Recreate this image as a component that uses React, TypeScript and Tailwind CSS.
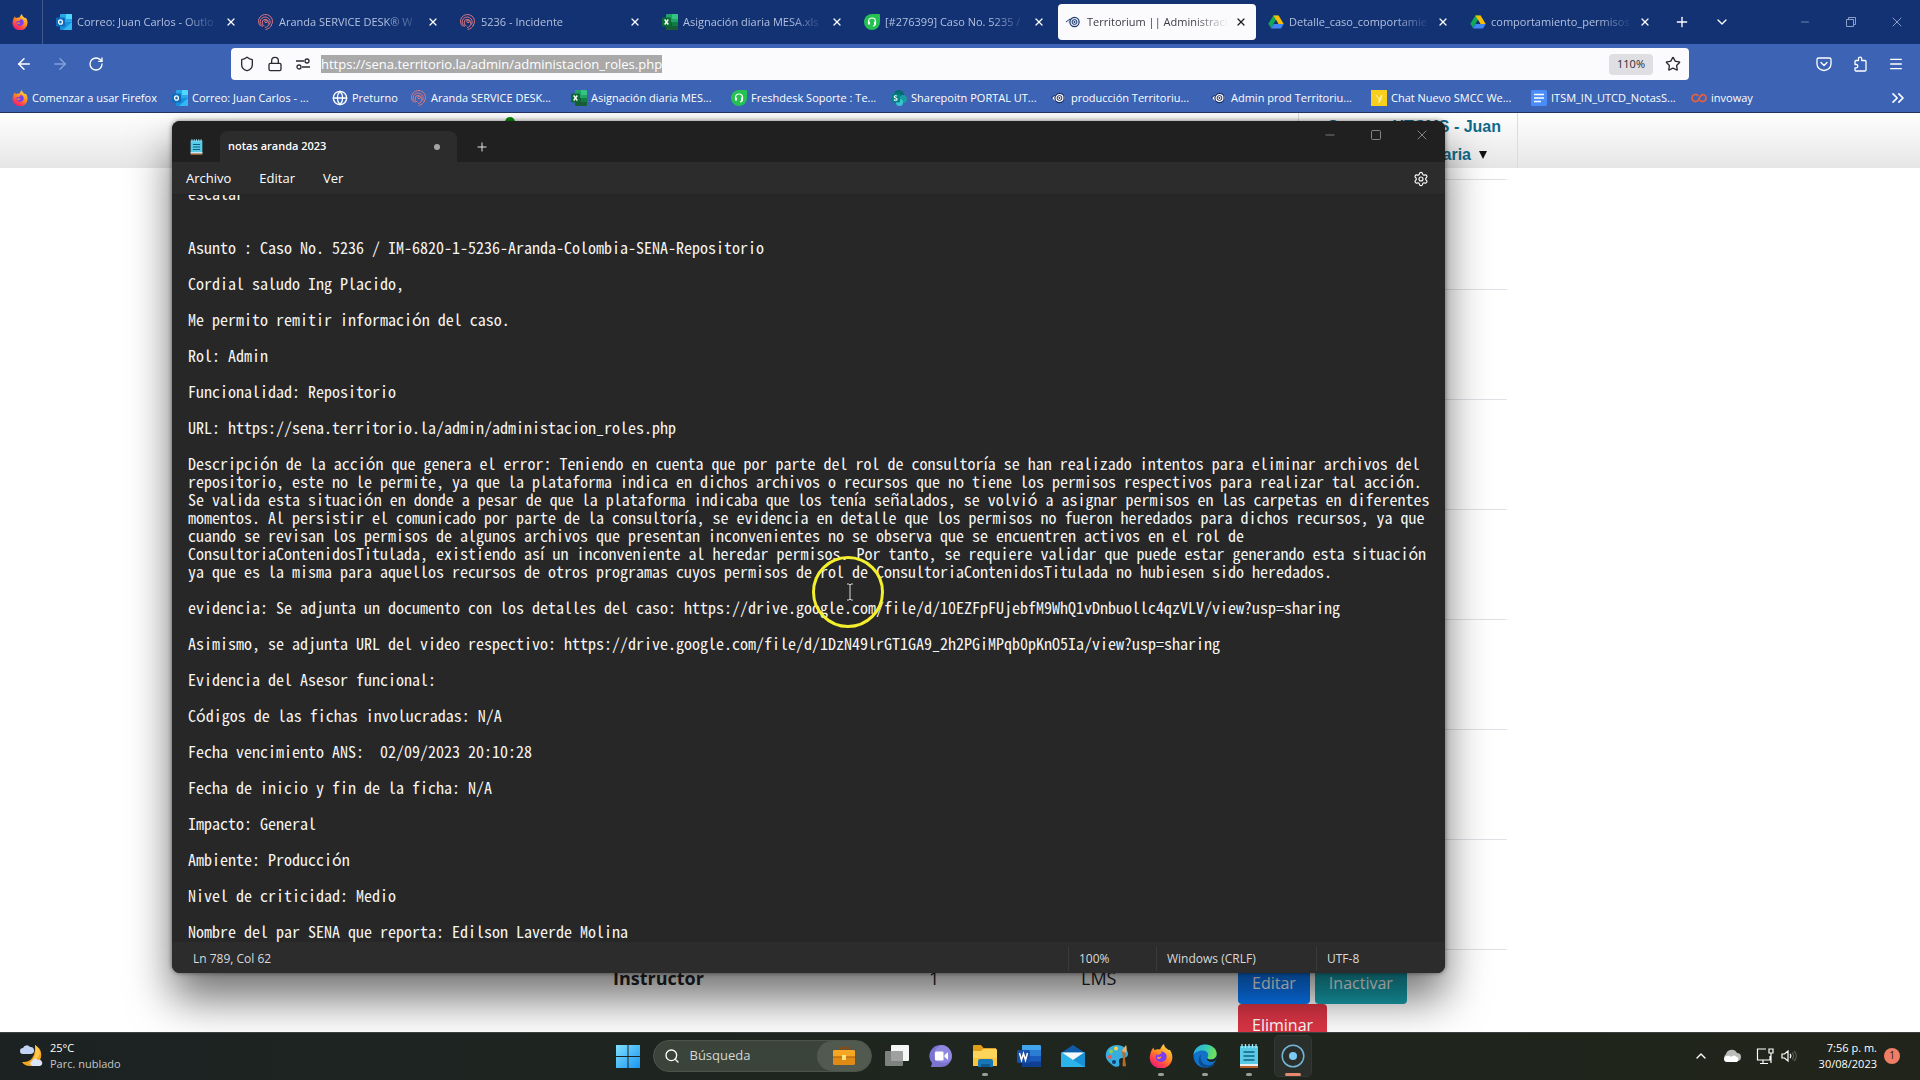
import type { ReactNode } from 'react'
import { ArrowLeft, ArrowRight, ChevronDown, ChevronUp, ChevronsRight, Globe, Lock, Menu, Minus, Plus, RotateCw, Search, Settings, Shield, Square, Star, X } from 'lucide-react'

/* ---------- icons ---------- */

function Firefox({ className = 'size-4' }: { className?: string }){
  return (
    <svg viewBox="0 0 24 24" className={className} aria-hidden="true">
      <defs>
        <linearGradient id="ffx" x1="0.8" y1="0" x2="0.2" y2="1">
          <stop offset="0" stopColor="#ffe14a" />
          <stop offset="0.45" stopColor="#ff8a1f" />
          <stop offset="0.75" stopColor="#ff3d4f" />
          <stop offset="1" stopColor="#e31587" />
        </linearGradient>
      </defs>
      <path d="M15 0c0 2 1 3.200 3 4.800 1.500 1.200 2 1.600 2.700 1 1.600 2 2.600 4.600 2.600 7.200A11.300 11 0 1 1 1.500 9.500C2 7 3 5 4.600 3.400c0 1.200.4 2 1 2.600C8 5 9.500 5 11 5.600 12 3.500 13 1.200 15 0z" fill="url(#ffx)" />
      <path d="M12 7.500c3.500 0 6 2.500 5.600 5.800-.4 3-3 4.700-5.600 4.600-3.200-.1-5.400-2.300-5.400-5 0-1 .3-1.800.8-2.500.9.5 2 .4 3 0 1-.4 1.200-1 2.200-1.100-.2-.9-.6-1.400-.6-1.800z" fill="#7a3df0" />
      <path d="M8 12.500c1.500.9 3 .8 4.500-.2-.4 1.800-1.400 2.700-3 2.700-1 0-1.500-1-1.500-2.500z" fill="#ff9a2b" />
    </svg>
  )
}

function Outlook(){
  return (
    <svg viewBox="0 0 16 16" className="size-4" aria-hidden="true">
      <path d="M5 0h10a1 1 0 0 1 1 1v8H4V1a1 1 0 0 1 1-1z" fill="#28a8ea" />
      <path d="M10 0h5a1 1 0 0 1 1 1v4h-6z" fill="#50d9ff" />
      <path d="M4 8h12v7a1 1 0 0 1-1 1H5a1 1 0 0 1-1-1z" fill="#1490df" />
      <path d="M16 8v7a1 1 0 0 1-1 1H7z" fill="#35b8f1" />
      <rect x="0" y="3.500" width="9" height="9" rx="1" fill="#0f6cbd" />
      <ellipse cx="4.500" cy="8" rx="1.900" ry="2.200" fill="none" stroke="#fff" strokeWidth="1.300" />
    </svg>
  )
}

function Aranda(){
  return (
    <svg viewBox="0 0 16 16" className="size-4" fill="none" stroke="#d9767f" strokeWidth="1" aria-hidden="true">
      <path d="M3 12.500A7 6.800 0 1 1 13 11.500M5 12.500A5 5 0 1 1 11.500 10.500M6.500 12A3.200 3.400 0 1 1 10.500 9M7.500 15.500c3-.6 5-2 6-4.500M7 13.500c2.500-.3 4-2 4-5" />
      <circle cx="8" cy="7.300" r="1.300" />
    </svg>
  )
}

function Excel(){
  return (
    <svg viewBox="0 0 16 16" className="size-4" aria-hidden="true">
      <rect x="4" y="0" width="12" height="16" rx="1" fill="#21a366" />
      <path d="M10 0h5a1 1 0 0 1 1 1v4h-6z" fill="#33c481" />
      <path d="M4 8h12v7a1 1 0 0 1-1 1H5a1 1 0 0 1-1-1z" fill="#185c37" />
      <path d="M10 8h6v4h-6z" fill="#107c41" />
      <rect x="0" y="3.500" width="9" height="9" rx="1" fill="#0b6a35" />
      <path d="M2.700 5.500l3.600 5M6.300 5.500l-3.600 5" stroke="#fff" strokeWidth="1.400" />
    </svg>
  )
}

function Freshdesk(){
  return (
    <svg viewBox="0 0 16 16" className="size-4" aria-hidden="true">
      <path d="M8 0h7a1 1 0 0 1 1 1v7a8 8 0 1 1-8-8z" fill="#25c151" />
      <path d="M4.500 9V7.500a3.500 3.500 0 0 1 7 0V9c0 2-1 2.800-2.500 3" fill="none" stroke="#fff" strokeWidth="1.200" />
      <path d="M4 7.500h2v3H4zM10 7.500h2v3h-2z" fill="#fff" />
    </svg>
  )
}

function Territorium({ ring = '#fff', ink = '#1d2f63' }: { ring?: string, ink?: string }){
  return (
    <svg viewBox="0 0 16 16" className="size-4" fill="none" aria-hidden="true">
      <path d="M1.500 8C4 3 12 2 14 8c-2 6-10 5-12.500 0z" fill={ring} />
      <path d="M0 8l4-3" stroke={ink} strokeWidth="1" />
      <circle cx="8.500" cy="8" r="4.600" stroke={ink} strokeWidth="1.200" />
      <circle cx="8.500" cy="8" r="2.400" stroke={ink} strokeWidth="1" />
      <circle cx="8.500" cy="8" r="0.900" fill={ink} />
    </svg>
  )
}

function Drive(){
  return (
    <svg viewBox="0 0 16 16" className="size-4" aria-hidden="true">
      <path d="M5.400 1.500h5.200L8 6 3 14 .3 9.800z" fill="#0fa958" />
      <path d="M5.400 1.500h5.200l5.100 8.500h-5.300z" fill="#fbbc05" />
      <path d="M5.500 10h10.200L13 14.500H2.800z" fill="#4285f4" />
      <path d="M8 6l2.400 4H5.500z" fill="#123274" />
    </svg>
  )
}

function Sharepoint(){
  return (
    <svg viewBox="0 0 16 16" className="size-4" aria-hidden="true">
      <circle cx="8" cy="5" r="5" fill="#036c70" />
      <circle cx="12" cy="9" r="4" fill="#1a9ba1" />
      <circle cx="8.500" cy="12.500" r="3.500" fill="#37c6d0" />
      <rect x="0" y="3.500" width="9" height="9" rx="1" fill="#038387" />
      <path d="M6 6.300C5.500 5.500 3.200 5.500 3.200 6.800c0 1.400 2.900.9 2.900 2.400 0 1.300-2.400 1.400-3.200.4" fill="none" stroke="#fff" strokeWidth="1.100" />
    </svg>
  )
}

function ChatBox(){
  return (
    <svg viewBox="0 0 16 16" className="size-4" aria-hidden="true">
      <rect width="16" height="16" fill="#f8cf1d" />
      <path d="M5 5l3 4 3-4-1 4-2 4V9z" fill="#fff1a8" stroke="#fff6cc" strokeWidth="0.600" />
    </svg>
  )
}

function Doc(){
  return (
    <svg viewBox="0 0 16 16" className="size-4" aria-hidden="true">
      <rect width="16" height="16" rx="1.500" fill="#4a8df8" />
      <path d="M3 4.500h10M3 8h10M3 11.500h7" stroke="#fff" strokeWidth="1.600" />
    </svg>
  )
}

function Invoway(){
  return (
    <svg viewBox="0 0 16 16" className="size-4" fill="none" stroke="#e8603c" strokeWidth="1.700" strokeLinecap="round" aria-hidden="true">
      <path d="M7 5.500C5 3.500 1 4.500 1 8s4 4.500 6 2.500L9.500 6C11 3.500 15 4.500 15 8s-4 4.500-6 2.500" />
    </svg>
  )
}

function NotepadGlyph({ className }: { className: string }){
  return (
    <svg viewBox="0 0 20 24" className={className} aria-hidden="true">
      <rect x="1" y="2" width="18" height="21" rx="1" fill="#57cbe8" />
      <rect x="1" y="20" width="18" height="2" fill="#e9eef0" />
      <rect x="1" y="22" width="18" height="2" fill="#b5622a" />
      <path d="M3 0v4M6.500 0v4M10 0v4M13.500 0v4M17 0v4" stroke="#a9ebfa" strokeWidth="1.300" />
      <path d="M4.500 8h11M4.500 12h11M4.500 16h11" stroke="#12617c" strokeWidth="1.600" />
    </svg>
  )
}

function Permissions(){
  return (
    <svg viewBox="0 0 16 16" className="size-4" fill="none" stroke="#2b2a33" strokeWidth="1.300" aria-hidden="true">
      <path d="M1 5h8M7 11h8" />
      <circle cx="12" cy="5" r="2" />
      <circle cx="4" cy="11" r="2" />
    </svg>
  )
}

function Pocket(){
  return (
    <svg viewBox="0 0 16 16" className="size-4" fill="none" stroke="#fff" strokeWidth="1.300" strokeLinecap="round" strokeLinejoin="round" aria-hidden="true">
      <path d="M2.500 2h11A1.500 1.500 0 0 1 15 3.500V8A7 6.500 0 0 1 1 8V3.500A1.500 1.500 0 0 1 2.500 2z" />
      <path d="M5 6.500l3 3 3-3" />
    </svg>
  )
}

function Puzzle(){
  return (
    <svg viewBox="0 0 16 16" className="size-4" fill="none" stroke="#fff" strokeWidth="1.300" strokeLinejoin="round" aria-hidden="true">
      <path d="M6.500 4.500V2.700a1.600 1.600 0 0 1 3.200 0v1.800H13a1 1 0 0 1 1 1V14a1 1 0 0 1-1 1H4a1 1 0 0 1-1-1v-2.200h1.500a1.700 1.700 0 0 0 0-3.300H3v-3a1 1 0 0 1 1-1z" />
    </svg>
  )
}

function Restore(){
  return (
    <svg viewBox="0 0 12 12" className="size-3" fill="none" stroke="#8ea0c8" strokeWidth="1" aria-hidden="true">
      <path d="M1.500 3.500h7v7h-7zM3.500 3.500v-2h7v7h-2" />
    </svg>
  )
}

function Weather(){
  return (
    <svg viewBox="0 0 24 24" className="size-6" aria-hidden="true">
      <path d="M16 1c5 3 7 7 6 12s-5 9-11 9c-4 0-7-2-8-4 8 1 14-5 13-17z" fill="#f5a623" />
      <path d="M16 1c3 2 5 5 5 8-2 6-6 10-12 11 6-3 9-10 7-19z" fill="#ffc84a" />
      <path d="M4 10a3 3 0 0 1 0-6 4 4 0 0 1 7-1 3.500 3.500 0 0 1 1 7z" fill="#c3d3f5" />
      <path d="M13 22a2.700 2.700 0 0 1 0-5 3.600 3.600 0 0 1 6-1 3 3 0 0 1 2 6z" fill="#dbe4f8" />
    </svg>
  )
}

function Windows(){
  return (
    <svg viewBox="0 0 24 24" className="size-6" aria-hidden="true">
      <defs>
        <linearGradient id="win" x1="0" y1="0" x2="1" y2="1">
          <stop offset="0" stopColor="#7fe0ff" />
          <stop offset="1" stopColor="#1a95f0" />
        </linearGradient>
      </defs>
      <path d="M0 1h11.500v11H0zM12.500 1H24v11H12.500zM0 13h11.500v11H0zM12.500 13H24v11H12.500z" fill="url(#win)" />
    </svg>
  )
}

function Briefcase(){
  return (
    <svg viewBox="0 0 24 20" className="h-5 w-6" aria-hidden="true">
      <path d="M8 4V2h8v2" fill="none" stroke="#8a4a10" strokeWidth="1.800" />
      <rect x="1" y="4" width="22" height="15" rx="1.500" fill="#e08a16" />
      <rect x="1" y="4" width="22" height="7" rx="1.500" fill="#f5a623" />
      <path d="M1 11h22" stroke="#a35a0c" />
      <rect x="10" y="9" width="4" height="5" fill="#ffe27a" />
    </svg>
  )
}

function TaskView(){
  return (
    <svg viewBox="0 0 24 24" className="size-6" aria-hidden="true">
      <rect x="6" y="1" width="18" height="16" rx="1" fill="#f6f6f6" />
      <rect x="0" y="7" width="18" height="15" rx="1" fill="#8f9290" fillOpacity="0.850" />
    </svg>
  )
}

function Chat(){
  return (
    <svg viewBox="0 0 24 24" className="size-6" aria-hidden="true">
      <path d="M12 1a11 11 0 1 1 0 22H2l1-4A11 11 0 0 1 12 1z" fill="#7b74cf" />
      <path d="M12 1a11 11 0 0 1 10 15c-3 3-10 4-16 0C3 10 6 4 12 1z" fill="#8f88de" />
      <rect x="6" y="7.500" width="8.500" height="9" rx="1.300" fill="#fff" />
      <path d="M15.500 11l3.500-2.800v7.600L15.500 13z" fill="#fff" />
    </svg>
  )
}

function Explorer(){
  return (
    <svg viewBox="0 0 24 24" className="size-6" aria-hidden="true">
      <path d="M1 1h7l2.500 3H23v6H0V2a1 1 0 0 1 1-1z" fill="#e09f18" />
      <path d="M0 7l8 0 2.500-2H23a1 1 0 0 1 1 1v16H0z" fill="#ffd45a" />
      <path d="M0 14h24v8H0z" fill="#fbc53c" />
      <path d="M5 23v-6a2 2 0 0 1 2-2h11a2 2 0 0 1 2 2v6z" fill="#1976b5" />
      <path d="M8 20h9v3H8z" fill="#0f5a90" />
    </svg>
  )
}

function Word(){
  return (
    <svg viewBox="0 0 24 24" className="size-6" aria-hidden="true">
      <rect x="5" y="1" width="19" height="22" rx="1.500" fill="#2b7cd3" />
      <path d="M5 1h17.500A1.500 1.500 0 0 1 24 2.500V6H5z" fill="#41a5ee" />
      <path d="M5 12h19v6H5z" fill="#185abd" />
      <path d="M5 17.500h19v4a1.500 1.500 0 0 1-1.500 1.500H5z" fill="#103f91" />
      <rect x="0" y="6" width="13" height="13" rx="1.500" fill="#184fa8" />
      <path d="M2.500 9l2 7 2-6.500 2 6.500 2-7" fill="none" stroke="#fff" strokeWidth="1.500" />
    </svg>
  )
}

function Mail(){
  return (
    <svg viewBox="0 0 24 24" className="size-6" aria-hidden="true">
      <path d="M12 1l12 8-12 7L0 9z" fill="#0f5ba8" />
      <path d="M0 8.500h24V23H0z" fill="#2bb3ea" />
      <path d="M24 8.500V23L8 13.500z" fill="#1890d6" />
      <path d="M1 8.500h22L12 16z" fill="#f4f8fb" />
    </svg>
  )
}

function Paint(){
  return (
    <svg viewBox="0 0 24 24" className="size-6" aria-hidden="true">
      <path d="M12 1c6 0 11 4 11 9 0 3-3 4-6 4-2 0-3 1-3 3 0 2 1 3 0 5-1 1.500-5 1-8-2C2 17 0 13 1 9c1-5 6-8 11-8z" fill="#37aee0" />
      <circle cx="5" cy="13" r="2" fill="#f25a4a" />
      <circle cx="6" cy="7.500" r="2" fill="#8bd34a" />
      <circle cx="11" cy="4.500" r="2" fill="#ffd43b" />
      <circle cx="9" cy="18" r="2" fill="#123f70" />
      <path d="M17 6l4 1-1 8 1 6c0 2-3 2-3.500 0L18 15z" fill="#b86a2a" />
      <path d="M17 7c1-3 3-4 4-6 1 2 1 5 0 8z" fill="#eab06a" />
    </svg>
  )
}

function Edge(){
  return (
    <svg viewBox="0 0 24 24" className="size-6" aria-hidden="true">
      <defs>
        <linearGradient id="edge" x1="0" y1="0" x2="1" y2="0.300">
          <stop offset="0" stopColor="#2aa6e8" />
          <stop offset="0.600" stopColor="#38cdb0" />
          <stop offset="1" stopColor="#6fe05a" />
        </linearGradient>
      </defs>
      <circle cx="12" cy="12" r="11.500" fill="#1272c8" />
      <path d="M.5 11C1 5 6 .5 12 .5c7 0 12 4.500 11.700 9.500-.2 3.500-3 5.500-6 5.500-2.200 0-3.500-.7-3.500-1.500 0-.6 1-1.200 1-3 0-2.300-2.200-4.500-5.500-4.500C5.500 6.500 1.500 8.500.5 11z" fill="url(#edge)" />
      <path d="M9 9c-2 2-2 6 0 9 2.500 3.500 7 4 11 2 1-.5 1.500 0 1 .8C18 24 13 24 10 23c-5-2-6-9-1-14z" fill="#0b4d94" />
      <path d="M14 14c.5 1 2 1.700 4 1.500 3-.2 5-1.500 5.500-3.500 0 3-1 5-3 5.500-4 1-7-1-6.500-3.500z" fill="#1c2222" />
    </svg>
  )
}

function Recorder(){
  return (
    <svg viewBox="0 0 24 24" className="size-6" aria-hidden="true">
      <circle cx="12" cy="12" r="10.800" fill="none" stroke="#71b5d3" strokeWidth="1.500" />
      <circle cx="12" cy="12" r="4" fill="#7cc9f2" />
    </svg>
  )
}

/* ---------- data ---------- */

const tabs: { icon: ReactNode, label: string, active?: boolean }[] = [
  { icon: <Outlook />, label: 'Correo: Juan Carlos - Outlo' },
  { icon: <Aranda />, label: 'Aranda SERVICE DESK® W' },
  { icon: <Aranda />, label: '5236 - Incidente' },
  { icon: <Excel />, label: 'Asignación diaria MESA.xls' },
  { icon: <Freshdesk />, label: '[#276399] Caso No. 5235 /' },
  { icon: <Territorium ring="#dfe5f2" ink="#1f3a6e" />, label: 'Territorium || Administració', active: true },
  { icon: <Drive />, label: 'Detalle_caso_comportamie' },
  { icon: <Drive />, label: 'comportamiento_permisos' },
]

const bookmarks: { icon: ReactNode, label: string, short?: boolean }[] = [
  { icon: <Firefox />, label: 'Comenzar a usar Firefox' },
  { icon: <Outlook />, label: 'Correo: Juan Carlos - ...' },
  { icon: <Globe className="size-4 text-white" strokeWidth={2} />, label: 'Preturno', short: true },
  { icon: <Aranda />, label: 'Aranda SERVICE DESK...' },
  { icon: <Excel />, label: 'Asignación diaria MES...' },
  { icon: <Freshdesk />, label: 'Freshdesk Soporte : Te...' },
  { icon: <Sharepoint />, label: 'Sharepoitn PORTAL UT...' },
  { icon: <Territorium />, label: 'producción Territoriu...' },
  { icon: <Territorium />, label: 'Admin prod Territoriu...' },
  { icon: <ChatBox />, label: 'Chat Nuevo SMCC We...' },
  { icon: <Doc />, label: 'ITSM_IN_UTCD_NotasS...' },
  { icon: <Invoway />, label: 'invoway' },
]

const note = `escalar


Asunto : Caso No. 5236 / IM-6820-1-5236-Aranda-Colombia-SENA-Repositorio

Cordial saludo Ing Placido,

Me permito remitir información del caso.

Rol: Admin

Funcionalidad: Repositorio

URL: https://sena.territorio.la/admin/administacion_roles.php

Descripción de la acción que genera el error: Teniendo en cuenta que por parte del rol de consultoría se han realizado intentos para eliminar archivos del
repositorio, este no le permite, ya que la plataforma indica en dichos archivos o recursos que no tiene los permisos respectivos para realizar tal acción.
Se valida esta situación en donde a pesar de que la plataforma indicaba que los tenía señalados, se volvió a asignar permisos en las carpetas en diferentes
momentos. Al persistir el comunicado por parte de la consultoría, se evidencia en detalle que los permisos no fueron heredados para dichos recursos, ya que
cuando se revisan los permisos de algunos archivos que presentan inconvenientes no se observa que se encuentren activos en el rol de
ConsultoriaContenidosTitulada, existiendo así un inconveniente al heredar permisos. Por tanto, se requiere validar que puede estar generando esta situación
ya que es la misma para aquellos recursos de otros programas cuyos permisos de rol de ConsultoriaContenidosTitulada no hubiesen sido heredados.

evidencia: Se adjunta un documento con los detalles del caso: https://drive.google.com/file/d/10EZFpFUjebfM9WhQ1vDnbuollc4qzVLV/view?usp=sharing

Asimismo, se adjunta URL del video respectivo: https://drive.google.com/file/d/1DzN49lrGT1GA9_2h2PGiMPqb0pKnO5Ia/view?usp=sharing

Evidencia del Asesor funcional:

Códigos de las fichas involucradas: N/A

Fecha vencimiento ANS:  02/09/2023 20:10:28

Fecha de inicio y fin de la ficha: N/A

Impacto: General

Ambiente: Producción

Nivel de criticidad: Medio

Nombre del par SENA que reporta: Edilson Laverde Molina`

const apps: { name: string, icon: ReactNode, open?: boolean, active?: boolean }[] = [
  { name: 'Vista de tareas', icon: <TaskView /> },
  { name: 'Chat', icon: <Chat /> },
  { name: 'Explorador', icon: <Explorer />, open: true },
  { name: 'Word', icon: <Word /> },
  { name: 'Correo', icon: <Mail /> },
  { name: 'Paint', icon: <Paint /> },
  { name: 'Firefox', icon: <Firefox className="size-6" />, open: true },
  { name: 'Edge', icon: <Edge />, open: true },
  { name: 'Bloc de notas', icon: <NotepadGlyph className="h-6 w-5" />, open: true },
  { name: 'Grabadora', icon: <Recorder />, active: true },
]

/* ---------- browser ---------- */

function TabStrip(){
  return (
    <div className="flex h-11 items-center bg-[#123274] text-[#b3c0de]">
      <div className="flex h-full w-[43px] shrink-0 items-center border-r border-[#41598f] pl-3"><Firefox /></div>
      <div role="tablist" className="ml-[3px] flex min-w-0">
        {tabs.map(t => (
          <div key={t.label} className="w-[202px] min-w-0 px-0.5">
            <div className={`flex h-9 items-center rounded pl-2 pr-[3px] ${t.active ? 'bg-[#fbfbfe] text-[#3b3b45]' : ''}`}>
              <span className="shrink-0">{t.icon}</span>
              <button role="tab" aria-selected={!!t.active} className="ml-[5px] min-w-0 flex-1 whitespace-nowrap text-left text-[11px] [mask-image:linear-gradient(to_right,black_75%,transparent)]">{t.label}</button>
              <button aria-label="Cerrar pestaña" className={`flex size-6 shrink-0 items-center justify-center ${t.active ? 'text-[#1c1c22]' : 'text-white'}`}><X className="size-3" strokeWidth={2.5} /></button>
            </div>
          </div>
        ))}
      </div>
      <button aria-label="Nueva pestaña" className="flex w-10 justify-center text-white"><Plus className="size-4" /></button>
      <button aria-label="Listar pestañas" className="flex w-10 justify-center text-white"><ChevronDown className="size-4" /></button>
      <div className="ml-auto flex text-[#8ea0c8]">
        <button aria-label="Minimizar" className="flex w-[46px] items-center justify-center"><Minus className="size-3" strokeWidth={1.5} /></button>
        <button aria-label="Restaurar" className="flex w-[46px] items-center justify-center"><Restore /></button>
        <button aria-label="Cerrar" className="flex w-[46px] items-center justify-center"><X className="size-4" strokeWidth={1.5} /></button>
      </div>
    </div>
  )
}

function Toolbar(){
  return (
    <div className="flex h-10 items-center px-3 text-white">
      <div className="flex gap-3">
        <button aria-label="Atrás" className="flex size-6 items-center justify-center"><ArrowLeft className="size-[18px]" /></button>
        <button aria-label="Adelante" className="flex size-6 items-center justify-center text-[#86a0d6]"><ArrowRight className="size-[18px]" /></button>
        <button aria-label="Recargar" className="flex size-6 items-center justify-center"><RotateCw className="size-4" /></button>
      </div>
      <div className="mx-[123px] flex h-8 min-w-0 flex-1 items-center gap-3 rounded bg-[#fbfbfe] px-2 text-[#2b2a33]">
        <Shield className="size-4 shrink-0" />
        <Lock className="size-4 shrink-0" />
        <Permissions />
        <input aria-label="Dirección" defaultValue="https://sena.territorio.la/admin/administacion_roles.php" className="-ml-0.5 h-[18px] bg-[#a9a9a9] text-[13px] leading-[18px] text-white outline-none field-sizing-content" />
        <button className="ml-auto h-[21px] rounded bg-[#dedee3] px-2 text-[11px]">110%</button>
        <button aria-label="Marcar página"><Star className="size-4" /></button>
      </div>
      <div className="flex gap-3">
        <button aria-label="Pocket" className="flex size-6 items-center justify-center"><Pocket /></button>
        <button aria-label="Extensiones" className="flex size-6 items-center justify-center"><Puzzle /></button>
        <button aria-label="Menú" className="flex size-6 items-center justify-center"><Menu className="size-4" /></button>
      </div>
    </div>
  )
}

function Bookmarks(){
  return (
    <nav className="flex h-7 items-center px-3 text-[11px] text-white">
      {bookmarks.map(b => (
        <a key={b.label} href="#" className={`flex shrink-0 items-center gap-1 overflow-hidden whitespace-nowrap ${b.short ? 'w-[79px]' : 'w-40'}`}>
          <span className="shrink-0">{b.icon}</span>{b.label}
        </a>
      ))}
      <button aria-label="Más marcadores" className="ml-auto"><ChevronsRight className="size-5" /></button>
    </nav>
  )
}

/* ---------- page behind ---------- */

function RolesPage(){
  return (
    <div>
      <header className="h-[55px] bg-linear-to-b from-white to-[#e6e6e6]">
        <div className="mx-auto flex h-full w-[1116px] max-w-full">
          <span className="ml-[103px] mt-1 size-2.5 rounded-full bg-[#0a8a0a]" />
          <div className="ml-auto w-[220px] border-x border-[#dcdcdc] pr-4 text-right font-['Liberation_Sans',sans-serif] text-base font-bold leading-7 text-[#0f6a8b]">
            <p className="whitespace-nowrap">Soporte UTCMS - Juan</p>
            <button className="flex w-full items-center justify-end gap-2 pr-3.5">Candelaria <svg viewBox="0 0 8 8" className="size-2"><path d="M0 0h8L4 8z" fill="#111" /></svg></button>
          </div>
        </div>
      </header>
      <table className="mx-auto mt-[11px] w-[1094px] max-w-full table-fixed text-lg text-[#212529]">
        <colgroup>
          <col className="w-[188px]" /><col className="w-[316px]" /><col className="w-[152px]" /><col className="w-[157px]" /><col className="w-[281px]" />
        </colgroup>
        <tbody>
          {Array.from({ length: 7 }, (_, i) => (
            <tr key={i} className="h-[110px] border-t border-[#dee2e6]"><td colSpan={5} /></tr>
          ))}
          <tr className="border-t border-[#dee2e6] align-top">
            <td />
            <th className="px-3 py-3.5 text-left font-bold">Instructor</th>
            <td className="px-3 py-3.5">1</td>
            <td className="px-3 py-3.5">LMS</td>
            <td className="px-3 pt-3">
              <div className="flex flex-wrap gap-x-[5px] text-base text-white">
                <button className="h-[42px] rounded bg-[#0a7cff] px-3.5">Editar</button>
                <button className="h-[42px] rounded bg-[#17a2b0] px-3.5">Inactivar</button>
                <button className="h-[42px] rounded bg-[#dc3545] px-3.5">Eliminar</button>
              </div>
            </td>
          </tr>
        </tbody>
      </table>
    </div>
  )
}

/* ---------- notepad ---------- */

function Notepad(){
  return (
    <section className="absolute left-[172px] top-2 flex h-[852px] w-[1273px] flex-col overflow-hidden rounded-lg bg-[#272727] text-white shadow-[0_26px_44px_rgba(0,0,0,0.55),0_0_5px_rgba(0,0,0,0.5)]">
      <div className="flex h-[41px] shrink-0 bg-[#202020]">
        <div className="flex w-12 items-center justify-center pt-2.5"><NotepadGlyph className="h-4 w-[13px]" /></div>
        <div className="flex h-[31px] w-[237px] items-center self-end rounded-t-lg bg-[#2c2c2c] pl-2 pr-[17px]">
          <span className="text-[11px] font-semibold">notas aranda 2023</span>
          <span className="ml-auto size-1.5 rounded-full bg-[#a5a5a5]" />
        </div>
        <button aria-label="Nueva pestaña" className="mt-2.5 flex w-[50px] items-center justify-center"><Plus className="size-3.5" strokeWidth={1.5} /></button>
        <div className="ml-auto flex h-7 text-[#858585]">
          <button aria-label="Minimizar" className="flex w-[46px] items-center justify-center"><Minus className="size-3.5" strokeWidth={1.5} /></button>
          <button aria-label="Maximizar" className="flex w-[46px] items-center justify-center"><Square className="size-3" strokeWidth={2} /></button>
          <button aria-label="Cerrar" className="flex w-[46px] items-center justify-center"><X className="size-4" strokeWidth={1.5} /></button>
        </div>
      </div>
      <div className="flex h-8 shrink-0 items-center gap-7 bg-[#2c2c2c] pl-3.5 pr-4 pt-0.5 text-[13px]">
        <button>Archivo</button>
        <button>Editar</button>
        <button>Ver</button>
        <button aria-label="Configuración" className="ml-auto"><Settings className="size-4" strokeWidth={1.7} /></button>
      </div>
      <div className="flex min-h-0 flex-1 overflow-hidden border-t border-[#242424]">
        <textarea aria-label="Editor de texto" wrap="off" spellCheck={false} defaultValue={note} className="-mt-[11px] h-[800px] w-full resize-none overflow-hidden pl-4 font-['Noto_Sans_Mono_CJK_JP','Liberation_Mono',monospace] text-base leading-[18px] text-[#f5f5f5] outline-none" />
      </div>
      <footer className="z-10 flex h-[31px] shrink-0 items-center bg-[#2c2c2c] pl-[21px] pt-0.5 text-xs text-[#dadada]">
        <span>Ln 789, Col 62</span>
        <span className="ml-auto w-[88px] border-l border-[#3a3a3a] pl-2.5 leading-6">100%</span>
        <span className="w-40 border-l border-[#3a3a3a] pl-2.5 leading-6">Windows (CRLF)</span>
        <span className="w-[129px] border-l border-[#3a3a3a] pl-2.5 leading-6">UTF-8</span>
      </footer>
    </section>
  )
}

function Pointer(){
  return (
    <svg viewBox="0 0 74 74" className="pointer-events-none absolute left-[811px] top-[442px] size-[74px]" fill="none" aria-hidden="true">
      <circle cx="37" cy="37" r="34.500" stroke="#f3ef2c" strokeWidth="3" />
      <path d="M36 29h2l1 1 1-1h2M39 30v14M36 45h2l1-1 1 1h2" stroke="#d8d8d8" strokeWidth="1" />
    </svg>
  )
}

/* ---------- taskbar ---------- */

function Taskbar(){
  return (
    <footer className="grid h-12 shrink-0 grid-cols-[1fr_auto_1fr] items-center border-t border-[#3b4140] bg-linear-to-r from-[#1c2222] via-[#1e261f] to-[#21241a] pb-0.5 text-[11px] text-white">
      <button className="flex items-center gap-[7px] pl-[19px] text-left leading-4">
        <Weather />
        <span>25°C<br /><span className="text-[#c3c6c6]">Parc. nublado</span></span>
      </button>
      <div className="flex items-center">
        <button aria-label="Inicio" className="flex w-11 justify-center"><Windows /></button>
        <label className="mx-[3px] flex h-8 w-[219px] items-center rounded-full border border-[#4c544b] bg-[#3b443b] pl-2.5">
          <Search className="size-4 text-white" />
          <input aria-label="Búsqueda" placeholder="Búsqueda" className="ml-2.5 w-0 flex-1 text-[13px] placeholder:text-[#d5d8d4] outline-none" />
          <span className="flex h-full w-[54px] items-center justify-center rounded-full bg-[#525a50]"><Briefcase /></span>
        </label>
        {apps.map(a => (
          <button key={a.name} aria-label={a.name} className="flex w-11 justify-center">
            <span className={`relative flex h-10 w-9 items-center justify-center rounded ${a.active ? 'bg-[#2a2f2c] outline outline-[#343835]' : ''}`}>
              {a.icon}
              {a.open && <span className="absolute bottom-0 h-[3px] w-1.5 rounded-full bg-[#9a9d9b]" />}
              {a.active && <span className="absolute bottom-0 h-[3px] w-4 rounded-full bg-[#e58a6c]" />}
            </span>
          </button>
        ))}
      </div>
      <div className="flex items-center justify-end pr-5">
        <button aria-label="Iconos ocultos" className="flex w-8 justify-center"><ChevronUp className="size-4" /></button>
        <svg viewBox="0 0 18 18" className="mx-1.5 size-[18px]" aria-hidden="true">
          <path d="M4 14a4 4 0 0 1-1-7 6 6 0 0 1 11-1 4 4 0 0 1 0 8z" fill="#b9bbb8" />
          <path d="M4 15a3 3 0 0 1 0-6c2-.5 3 0 4 1 2-2 4-2 5-.5a3 3 0 0 1 1 5.500z" fill="#fff" />
        </svg>
        <svg viewBox="0 0 20 20" className="ml-2 size-5" fill="none" stroke="#fff" strokeWidth="1.200" aria-hidden="true">
          <path d="M11 3H2.500v11H15v-4M8 14v3M5 17.500h8M14 3h4v4h-4zM16 7v10" />
        </svg>
        <svg viewBox="0 0 20 20" className="ml-1 size-5" fill="none" stroke="#fff" strokeWidth="1.200" aria-hidden="true">
          <path d="M3 8h2.500L9 5v10l-3.500-3H3zM11 8c1 1.200 1 2.800 0 4" />
          <path d="M13 6.500c2 2 2 5 0 7M15 5c3 3 3 7 0 10" stroke="#5b5f57" />
        </svg>
        <button className="ml-5 text-right leading-4">7:56 p. m.<br />30/08/2023</button>
        <span className="ml-[7px] flex size-4 items-center justify-center rounded-full bg-[#ee7f66] text-[10px] text-[#2b1a14]">1</span>
      </div>
    </footer>
  )
}

export default function App(){
  return (
    <div className="flex h-screen flex-col overflow-hidden bg-white font-['Open_Sans','Noto_Sans',sans-serif]">
      <div className="shrink-0 border-b border-[#24345f] bg-[#3c63b4]">
        <TabStrip />
        <Toolbar />
        <Bookmarks />
      </div>
      <main className="relative min-h-0 flex-1 overflow-hidden">
        <RolesPage />
        <Notepad />
        <Pointer />
      </main>
      <Taskbar />
    </div>
  )
}
